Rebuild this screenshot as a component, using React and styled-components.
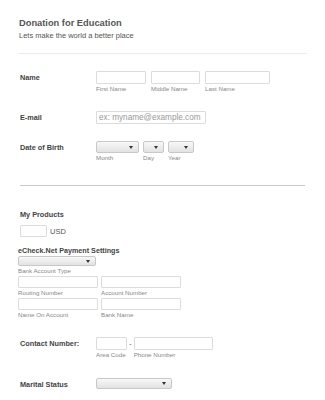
import React from "react";
import styled, { createGlobalStyle } from "styled-components";

const GlobalStyle = createGlobalStyle`
    body {
        margin: 0;
        background: #fff;
        font-family: "Liberation Sans", Arial, sans-serif;
    }
`;

const Page = styled.div`
    width: 325px;
    height: 400px;
    overflow: hidden;
    padding: 0 18px;
    box-sizing: border-box;
    color: #555;
`;

const Header = styled.div`
    padding: 17px 1px 12px;
    border-bottom: 1px solid #ececec;
`;

const Title = styled.div`
    font-size: 9.3px;
    font-weight: bold;
    line-height: 12px;
    color: #555;
`;

const Subtitle = styled.div`
    font-size: 7.5px;
    line-height: 10px;
    margin-top: 2px;
    color: #555;
`;

const Row = styled.div`
    display: flex;
    align-items: flex-start;
    padding-left: 2px;
    margin-top: ${props => props.top}px;
`;

const Label = styled.div`
    width: 76px;
    flex: none;
    font-size: 7.3px;
    font-weight: bold;
    line-height: 13px;
    color: #444;
`;

const Controls = styled.div`
    display: flex;
    align-items: flex-start;
    gap: ${props => props.gap ?? 5}px;
`;

const Field = styled.div`
    display: flex;
    flex-direction: column;
`;

const Input = styled.input`
    width: ${props => props.w}px;
    height: ${props => props.h ?? 13}px;
    box-sizing: border-box;
    border: 1px solid #dcdcdc;
    border-radius: 1px;
    padding: 0 2px;
    margin: 0;
    font-family: inherit;
    font-size: 8.2px;
    color: #555;
    background: #fff;
    outline: none;

    &::placeholder {
        color: #999;
    }
`;

const Sub = styled.div`
    font-size: 6.2px;
    line-height: 7px;
    margin-top: 1px;
    color: #888;
    white-space: nowrap;
`;

const Select = styled.div`
    width: ${props => props.w}px;
    height: ${props => props.h ?? 12}px;
    box-sizing: border-box;
    border: 1px solid #c8c8c8;
    border-radius: 2px;
    background: linear-gradient(#f8f8f8, #e2e2e2);
    display: flex;
    align-items: center;
    justify-content: flex-end;
    padding-right: 5px;

    &::after {
        content: "";
        border-left: 2px solid transparent;
        border-right: 2px solid transparent;
        border-top: 3px solid #333;
    }
`;

const Divider = styled.div`
    margin: ${props => props.top}px 2px 0 2px;
    border-top: 1px solid #c9c9c9;
`;

const Section = styled.div`
    margin-top: ${props => props.top}px;
    padding-left: ${props => props.left ?? 0}px;
`;

const SectionLabel = styled.div`
    font-size: ${props => props.size ?? 7.3}px;
    font-weight: bold;
    line-height: 10px;
    color: #444;
`;

const ProductLine = styled.div`
    display: flex;
    align-items: center;
    gap: 3px;
    margin-top: 5px;
`;

const Currency = styled.span`
    font-size: 7.5px;
    color: #555;
`;

const Pair = styled.div`
    display: flex;
    gap: 3px;
    margin-top: ${props => props.top ?? 3}px;
`;

const Dash = styled.span`
    font-size: 8px;
    line-height: 13px;
    color: #666;
    margin: 0 2px;
`;

export default function App() {
    return (
        <Page>
            <GlobalStyle />
            <Header>
                <Title>Donation for Education</Title>
                <Subtitle>Lets make the world a better place</Subtitle>
            </Header>

            <Row top={17}>
                <Label>Name</Label>
                <Controls>
                    <Field>
                        <Input w={50} />
                        <Sub>First Name</Sub>
                    </Field>
                    <Field>
                        <Input w={49} />
                        <Sub>Middle Name</Sub>
                    </Field>
                    <Field>
                        <Input w={65} />
                        <Sub>Last Name</Sub>
                    </Field>
                </Controls>
            </Row>

            <Row top={19}>
                <Label>E-mail</Label>
                <Input w={110} placeholder="ex: myname@example.com" />
            </Row>

            <Row top={17}>
                <Label>Date of Birth</Label>
                <Controls gap={4}>
                    <Field>
                        <Select w={43} />
                        <Sub>Month</Sub>
                    </Field>
                    <Field>
                        <Select w={21} />
                        <Sub>Day</Sub>
                    </Field>
                    <Field>
                        <Select w={26} />
                        <Sub>Year</Sub>
                    </Field>
                </Controls>
            </Row>

            <Divider top={24} />

            <Section top={24} left={2}>
                <SectionLabel>My Products</SectionLabel>
                <ProductLine>
                    <Input w={27} h={12} />
                    <Currency>USD</Currency>
                </ProductLine>
            </Section>

            <Section top={9}>
                <SectionLabel size={7.2}>eCheck.Net Payment Settings</SectionLabel>
                <Field>
                    <Select w={78} h={10} />
                    <Sub>Bank Account Type</Sub>
                </Field>
                <Pair top={2}>
                    <Field>
                        <Input w={80} h={12} />
                        <Sub>Routing Number</Sub>
                    </Field>
                    <Field>
                        <Input w={80} h={12} />
                        <Sub>Account Number</Sub>
                    </Field>
                </Pair>
                <Pair top={2}>
                    <Field>
                        <Input w={80} h={12} />
                        <Sub>Name On Account</Sub>
                    </Field>
                    <Field>
                        <Input w={80} h={12} />
                        <Sub>Bank Name</Sub>
                    </Field>
                </Pair>
            </Section>

            <Row top={19}>
                <Label>Contact Number:</Label>
                <Controls gap={0}>
                    <Field>
                        <Input w={31} />
                        <Sub>Area Code</Sub>
                    </Field>
                    <Dash>-</Dash>
                    <Field>
                        <Input w={79} />
                        <Sub>Phone Number</Sub>
                    </Field>
                </Controls>
            </Row>

            <Row top={20}>
                <Label>Marital Status</Label>
                <Select w={76} h={11} />
            </Row>
        </Page>
    );
}
